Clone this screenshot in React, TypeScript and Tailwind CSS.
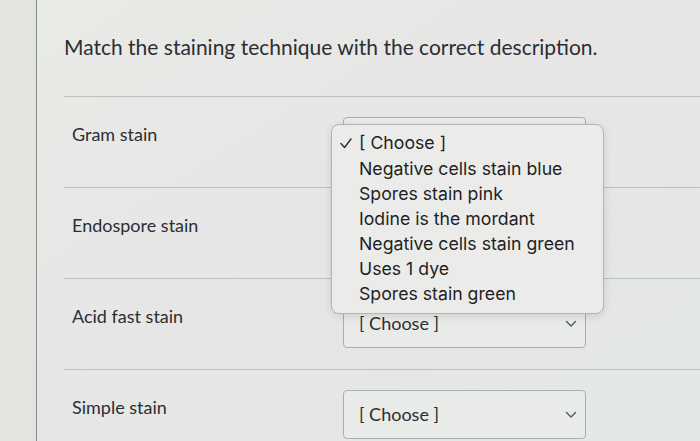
import React from "react";

const rows = ["Gram stain", "Endospore stain", "Acid fast stain", "Simple stain"];

const options = [
  "[ Choose ]",
  "Negative cells stain blue",
  "Spores stain pink",
  "Iodine is the mordant",
  "Negative cells stain green",
  "Uses 1 dye",
  "Spores stain green",
];

function Chevron() {
  return (
    <svg width="12" height="8" viewBox="0 0 12 8" fill="none">
      <path d="M1.5 1.5 L6 6 L10.5 1.5" stroke="#55595c" strokeWidth="1.4" strokeLinecap="round" strokeLinejoin="round" />
    </svg>
  );
}

function Check() {
  return (
    <svg width="12" height="11" viewBox="0 0 12 11" fill="none">
      <path d="M1 5.5 L4.5 9.5 L11 1" stroke="#333" strokeWidth="1.5" strokeLinecap="round" strokeLinejoin="round" />
    </svg>
  );
}

// covered = the open menu lies over this select
function Select({ covered }: { covered: boolean }) {
  return (
    <div className="flex h-[49px] w-[243px] items-center justify-between rounded-[4px] border border-[#a9adab] bg-[#eceeea]/60 pl-[15px] pr-[8px]">
      <span className={covered ? "invisible text-[18px]" : "text-[18px] text-[#2b2f33]"}>[ Choose ]</span>
      <Chevron />
    </div>
  );
}

export default function App() {
  return (
    <div
      className="relative flex h-[441px] w-[700px] overflow-hidden bg-gradient-to-br from-[#e9ebe6] via-[#e6e6e6] to-[#e3e8e6] text-[#2b2f33]"
      style={{ fontFamily: "Lato, 'Liberation Sans', sans-serif" }}
    >
      <div className="w-[37px] shrink-0 border-r border-[#858987] bg-[#e2e4df]" />
      <div className="flex-1 pl-[27px]">
        <h1 className="pt-[33px] text-[21px] leading-[28px]">
          Match the staining technique with the correct description.
        </h1>
        <div className="mt-[35px]">
          {rows.map((label, i) => (
            <div key={label} className="flex h-[91px] items-start border-t border-[#bdc1be] pt-[20px]">
              <div className="mt-[5px] w-[279px] shrink-0 pl-[8px] text-[18px] leading-[24px]">{label}</div>
              <Select covered={i < 2} />
            </div>
          ))}
        </div>
      </div>

      <div
        className="absolute left-[331px] top-[124px] w-[273px] rounded-[8px] border border-[#b3b5b3] bg-[#ebecea] py-[6px] shadow-[0_2px_8px_rgba(0,0,0,0.12)]"
        style={{ fontFamily: "Inter, 'Liberation Sans', sans-serif" }}
      >
        {options.map((o, i) => (
          <div key={o} className="flex h-[25.2px] items-center text-[17.7px] text-[#1f1f1f]">
            <span className="flex w-[27px] justify-center pl-[1px]">{i === 0 ? <Check /> : null}</span>
            {o}
          </div>
        ))}
      </div>
    </div>
  );
}
